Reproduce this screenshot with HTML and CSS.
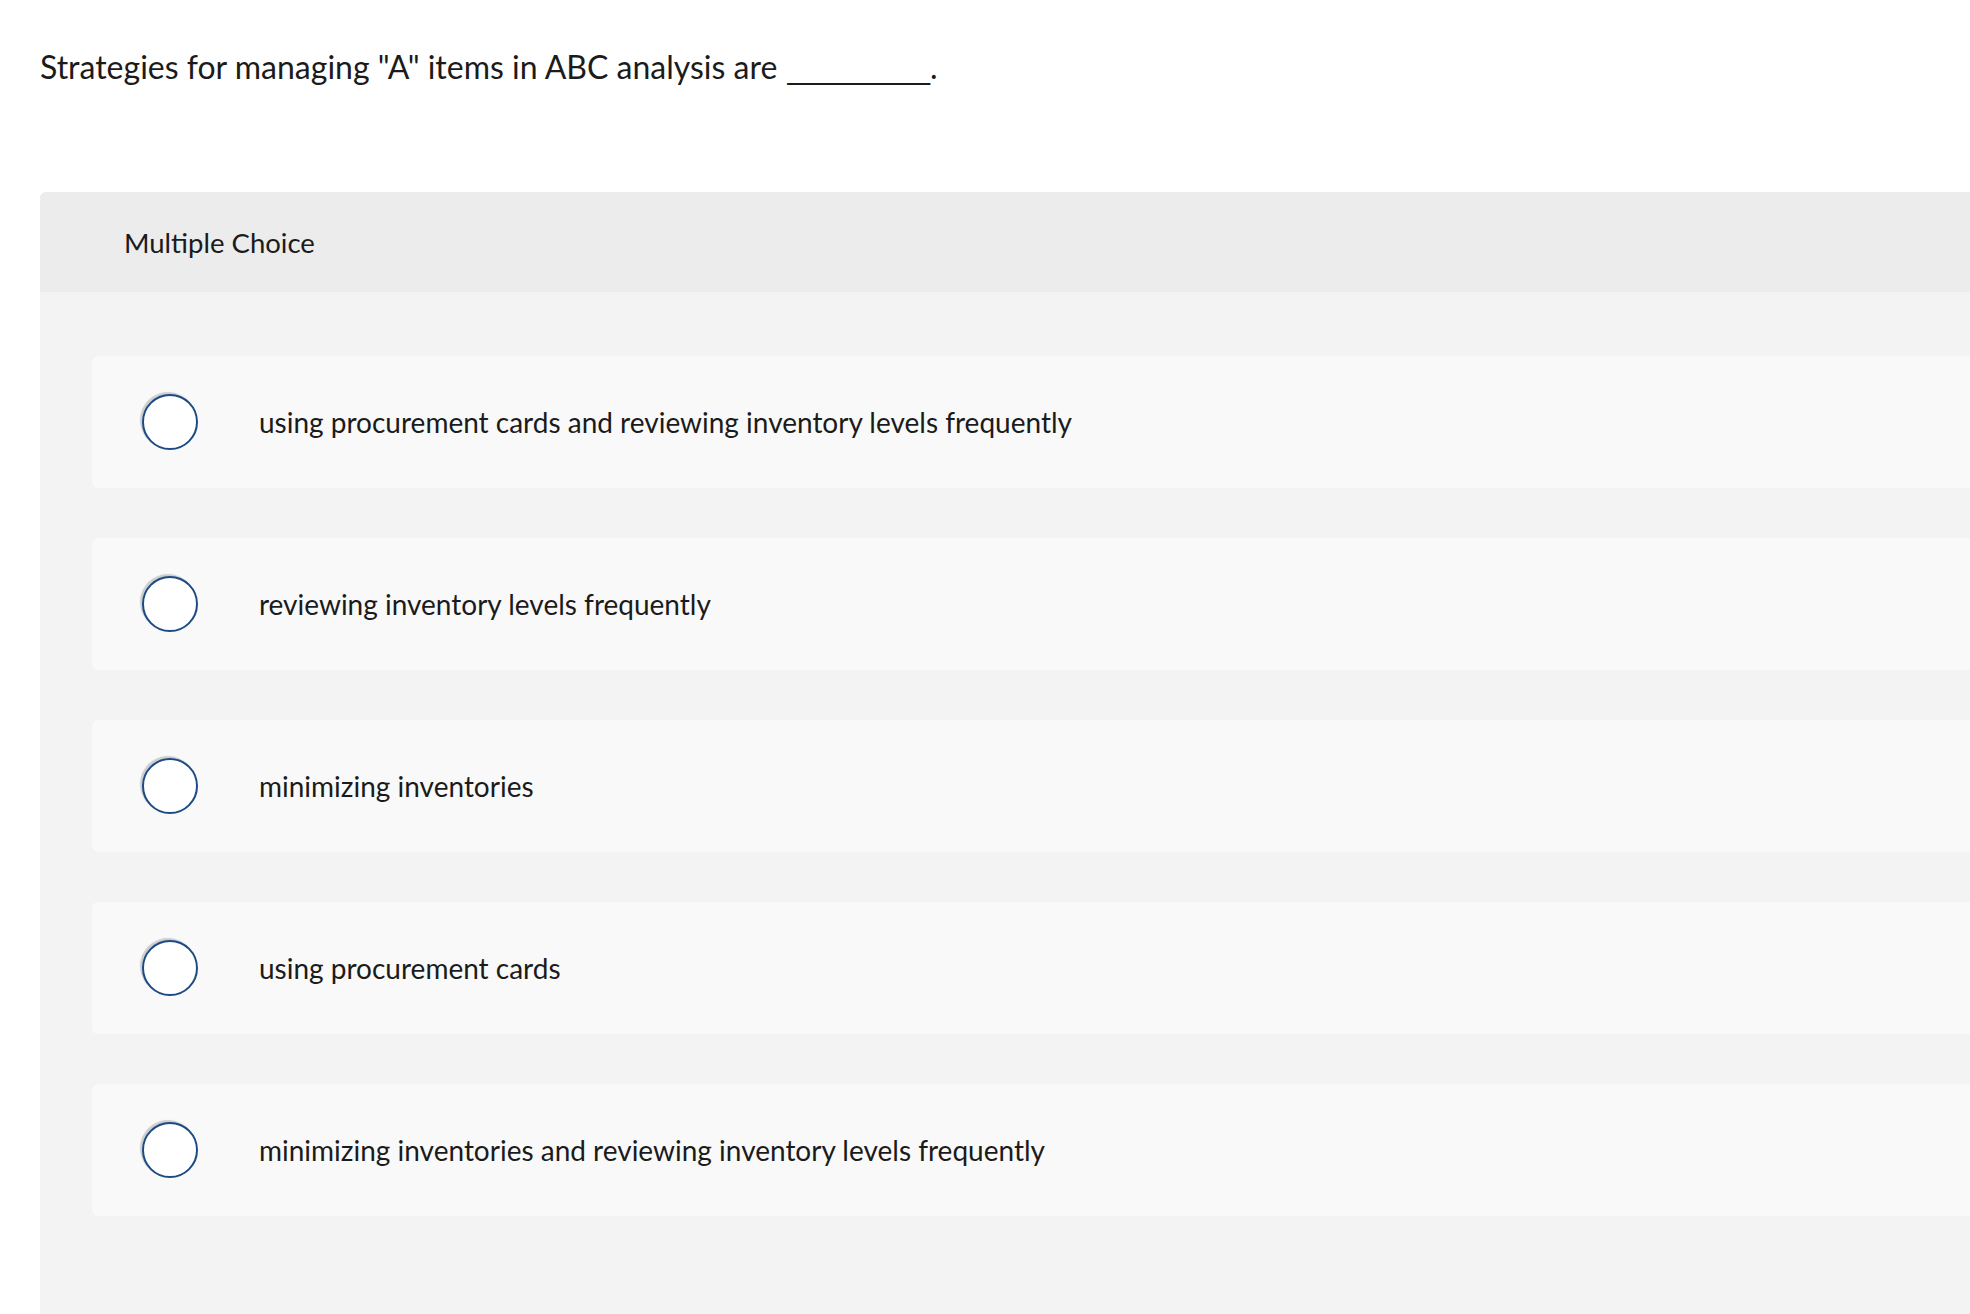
FILE: index.html
```html
<!DOCTYPE html>
<html lang="en">
<head>
<meta charset="utf-8">
<title>Multiple Choice</title>
<link rel="stylesheet" href="styles.css">
</head>
<body>
<div class="page">
  <p class="question">Strategies for managing "A" items in ABC analysis are <span class="blank">________</span>.</p>
  <section class="panel">
    <header class="panel-head">Multiple Choice</header>
    <div class="panel-body">
      <label class="option"><span class="radio"></span><span class="opt-text">using procurement cards and reviewing inventory levels frequently</span></label>
      <label class="option"><span class="radio"></span><span class="opt-text">reviewing inventory levels frequently</span></label>
      <label class="option"><span class="radio"></span><span class="opt-text">minimizing inventories</span></label>
      <label class="option"><span class="radio"></span><span class="opt-text">using procurement cards</span></label>
      <label class="option"><span class="radio"></span><span class="opt-text">minimizing inventories and reviewing inventory levels frequently</span></label>
    </div>
  </section>
</div>
</body>
</html>
```
FILE: styles.css
```css
html, body {
  margin: 0;
  padding: 0;
  background: #ffffff;
  overflow: hidden;
}
body {
  font-family: "Lato", "Liberation Sans", sans-serif;
  color: #1b1b1b;
}
.page {
  width: 1970px;
  height: 1314px;
  overflow: hidden;
}
.question {
  margin: 0;
  padding: 47px 0 0 40px;
  font-size: 32px;
  line-height: 40px;
  height: 40px;
  white-space: nowrap;
}
.blank {
  font-family: "Liberation Sans", sans-serif;
  margin-left: 2px;
}
.panel {
  margin: 105px 0 0 40px;
  width: 2100px;
  border-top-left-radius: 6px;
  overflow: hidden;
  background: #f3f3f3;
}
.panel-head {
  height: 100px;
  display: flex;
  align-items: center;
  padding-left: 84px;
  background: #ececec;
  font-size: 27.5px;
}
.panel-body {
  padding: 64px 0 120px 52px;
  display: flex;
  flex-direction: column;
  gap: 50px;
}
.option {
  height: 132px;
  display: flex;
  align-items: center;
  background: #f9f9f9;
  border-radius: 6px;
  padding-left: 50px;
}
.radio {
  width: 52px;
  height: 52px;
  border: 2px solid #1c4a86;
  border-radius: 50%;
  background: #ffffff;
  box-shadow: -2px -2px 1px 0 rgba(0, 0, 0, 0.18);
  flex: none;
}
.opt-text {
  margin-left: 61px;
  font-size: 28px;
  white-space: nowrap;
}
```
